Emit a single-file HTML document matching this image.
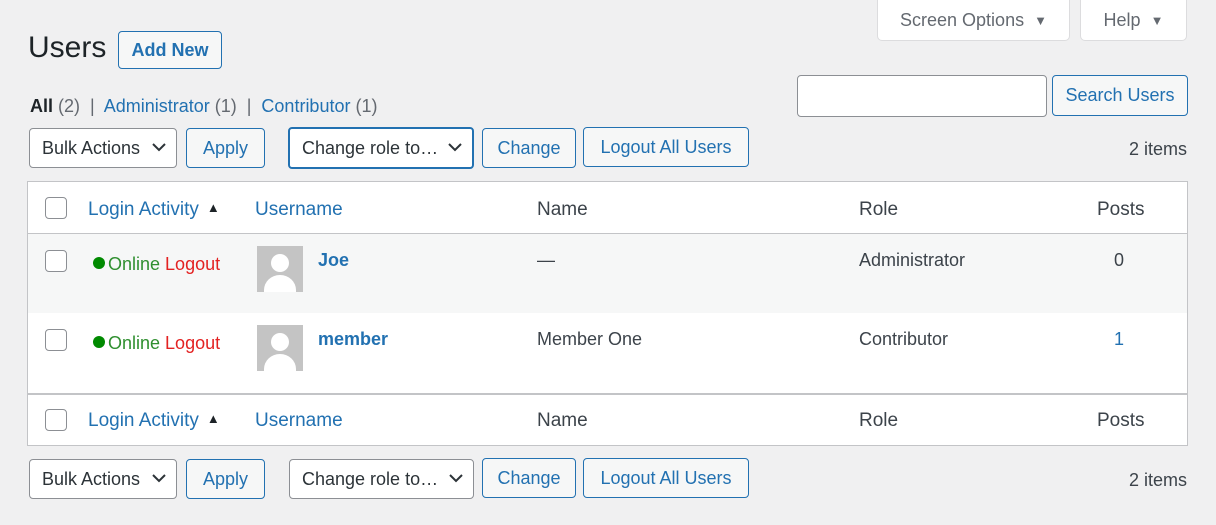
<!DOCTYPE html>
<html><head><meta charset="utf-8"><style>
*{box-sizing:border-box;margin:0;padding:0}
body{width:1216px;height:525px;background:#f0f0f1;font-family:"Liberation Sans",sans-serif;font-size:18px;color:#3c434a;position:relative;overflow:hidden}
.a{position:absolute;white-space:nowrap}
.btn{position:absolute;border:1.5px solid #2271b1;border-radius:4px;background:#f6f7f7;color:#2271b1;display:flex;align-items:center;justify-content:center;font-size:18px}
.sel{position:absolute;border:1.5px solid #8c8f94;border-radius:4px;background:#fff;color:#2c3338;display:flex;align-items:center;padding-left:12px;font-size:18px}
.sel svg{position:absolute;right:10px;top:50%;margin-top:-5px}
.tab{position:absolute;top:-4px;height:45px;background:#fff;border:1.5px solid #dcdcde;border-radius:0 0 5px 5px;color:#646970;display:flex;align-items:center;justify-content:center;font-size:18px;padding-top:4px}
.cb{position:absolute;left:45px;width:22px;height:22px;border:1.5px solid #8c8f94;border-radius:4px;background:#fff}
.link{color:#2271b1}
.av{position:absolute;left:257px;width:46px;height:46px;background:#c4c4c4;overflow:hidden}
.av:before{content:"";position:absolute;left:14px;top:8px;width:18px;height:18px;border-radius:50%;background:#fff}
.av:after{content:"";position:absolute;left:7px;top:29px;width:32px;height:30px;border-radius:50% 50% 0 0;background:#fff}
.dot{display:inline-block;width:12px;height:12px;border-radius:50%;background:#008a00;margin-right:3px;vertical-align:1px}
.tri{font-size:13px;color:#1d2327;vertical-align:3px;margin-left:8px}
</style></head><body>
<div class="tab" style="left:877px;width:193px">Screen Options&nbsp;&nbsp;<span style="font-size:13px">▼</span></div>
<div class="tab" style="left:1080px;width:107px">Help&nbsp;&nbsp;<span style="font-size:13px">▼</span></div>

<div class="a" style="left:28px;top:31px;font-size:30px;color:#1d2327">Users</div>
<div class="btn" style="left:118px;top:31px;width:104px;height:38px;font-weight:bold">Add New</div>

<div class="a" style="left:30px;top:96px;color:#646970"><b style="color:#1d2327">All</b> (2) &nbsp;|&nbsp; <span class="link">Administrator</span> (1) &nbsp;|&nbsp; <span class="link">Contributor</span> (1)</div>

<div class="a" style="left:797px;top:75px;width:250px;height:42px;background:#fff;border:1.5px solid #8c8f94;border-radius:4px"></div>
<div class="btn" style="left:1052px;top:75px;width:136px;height:41px">Search Users</div>

<div class="sel" style="left:29px;top:128px;width:148px;height:40px">Bulk Actions<svg width="14" height="9"><path d="M1 1l6 6 6-6" stroke="#2c3338" stroke-width="2" fill="none"/></svg></div>
<div class="btn" style="left:186px;top:128px;width:79px;height:40px">Apply</div>
<div class="sel" style="left:288px;top:127px;width:186px;height:42px;border:2px solid #2271b1">Change role to…<svg width="14" height="9"><path d="M1 1l6 6 6-6" stroke="#2c3338" stroke-width="2" fill="none"/></svg></div>
<div class="btn" style="left:482px;top:128px;width:94px;height:40px">Change</div>
<div class="btn" style="left:583px;top:127px;width:166px;height:40px">Logout All Users</div>
<div class="a" style="right:29px;top:139px">2 items</div>

<div class="a" style="left:27px;top:181px;width:1161px;height:265px;background:#fff;border:1.5px solid #c3c4c7"></div>
<div class="a" style="left:28px;top:233px;width:1159px;height:80px;background:#f6f7f7;border-top:1.5px solid #c3c4c7"></div>
<div class="a" style="left:28px;top:393px;width:1159px;height:1.5px;background:#c3c4c7"></div>

<div class="cb" style="top:197px"></div>
<div class="a link" style="left:88px;top:199px;font-size:19px">Login Activity<span class="tri">▲</span></div>
<div class="a link" style="left:255px;top:199px;font-size:19px">Username</div>
<div class="a" style="left:537px;top:199px;font-size:19px">Name</div>
<div class="a" style="left:859px;top:199px;font-size:19px">Role</div>
<div class="a" style="left:1097px;top:199px;font-size:19px">Posts</div>

<div class="cb" style="top:250px"></div>
<div class="a" style="left:93px;top:254px;color:#2f8f2f"><span class="dot"></span>Online <span style="color:#e32222">Logout</span></div>
<div class="av" style="top:246px"></div>
<div class="a link" style="left:318px;top:250px;font-weight:bold">Joe</div>
<div class="a" style="left:537px;top:250px">—</div>
<div class="a" style="left:859px;top:250px">Administrator</div>
<div class="a" style="left:1114px;top:250px">0</div>

<div class="cb" style="top:329px"></div>
<div class="a" style="left:93px;top:333px;color:#2f8f2f"><span class="dot"></span>Online <span style="color:#e32222">Logout</span></div>
<div class="av" style="top:325px"></div>
<div class="a link" style="left:318px;top:329px;font-weight:bold">member</div>
<div class="a" style="left:537px;top:329px">Member One</div>
<div class="a" style="left:859px;top:329px">Contributor</div>
<div class="a link" style="left:1114px;top:329px">1</div>

<div class="cb" style="top:409px"></div>
<div class="a link" style="left:88px;top:410px;font-size:19px">Login Activity<span class="tri">▲</span></div>
<div class="a link" style="left:255px;top:410px;font-size:19px">Username</div>
<div class="a" style="left:537px;top:410px;font-size:19px">Name</div>
<div class="a" style="left:859px;top:410px;font-size:19px">Role</div>
<div class="a" style="left:1097px;top:410px;font-size:19px">Posts</div>

<div class="sel" style="left:29px;top:459px;width:148px;height:40px">Bulk Actions<svg width="14" height="9"><path d="M1 1l6 6 6-6" stroke="#2c3338" stroke-width="2" fill="none"/></svg></div>
<div class="btn" style="left:186px;top:459px;width:79px;height:40px">Apply</div>
<div class="sel" style="left:289px;top:459px;width:185px;height:40px">Change role to…<svg width="14" height="9"><path d="M1 1l6 6 6-6" stroke="#2c3338" stroke-width="2" fill="none"/></svg></div>
<div class="btn" style="left:482px;top:458px;width:94px;height:40px">Change</div>
<div class="btn" style="left:583px;top:458px;width:166px;height:40px">Logout All Users</div>
<div class="a" style="right:29px;top:470px">2 items</div>
</body></html>
